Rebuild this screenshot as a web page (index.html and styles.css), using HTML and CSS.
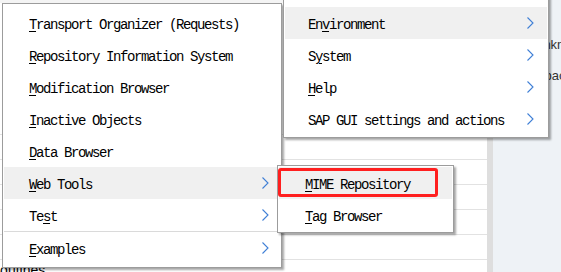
FILE: index.html
```html
<!DOCTYPE html>
<html>
<head>
<meta charset="utf-8">
<link rel="stylesheet" href="styles.css">
</head>
<body>
<div class="app">
  <div class="main">
    <div class="main-head"></div>
    <div class="row"></div>
    <div class="row"></div>
    <div class="row"></div>
    <div class="row"></div>
    <div class="row"></div>
    <div class="row last"><span class="row-text">Routines</span></div>
  </div>
  <div class="scroll"></div>
  <div class="side">
    <div class="side-line l1">Unknown</div>
    <div class="side-line l2">Workspace</div>
  </div>
</div>

<div class="menu menu-main">
  <div class="item"><span class="lbl"><u>T</u>ransport Organizer (Requests)</span></div>
  <div class="item"><span class="lbl"><u>R</u>epository Information System</span></div>
  <div class="item"><span class="lbl"><u>M</u>odification Browser</span></div>
  <div class="item"><span class="lbl"><u>I</u>nactive Objects</span></div>
  <div class="item"><span class="lbl"><u>D</u>ata Browser</span></div>
  <div class="item hl"><span class="lbl"><u>W</u>eb Tools</span><svg class="chev" width="7" height="12" viewBox="0 0 7 12"><polyline points="0.5,0.5 6,6 0.5,11.5"/></svg></div>
  <div class="item"><span class="lbl">Te<u>s</u>t</span><svg class="chev" width="7" height="12" viewBox="0 0 7 12"><polyline points="0.5,0.5 6,6 0.5,11.5"/></svg></div>
  <div class="sep"></div>
  <div class="item"><span class="lbl"><u>E</u>xamples</span><svg class="chev" width="7" height="12" viewBox="0 0 7 12"><polyline points="0.5,0.5 6,6 0.5,11.5"/></svg></div>
</div>

<div class="menu menu-sys">
  <div class="item"></div>
  <div class="item hl"><span class="lbl">En<u>v</u>ironment</span><svg class="chev" width="7" height="12" viewBox="0 0 7 12"><polyline points="0.5,0.5 6,6 0.5,11.5"/></svg></div>
  <div class="item"><span class="lbl">S<u>y</u>stem</span><svg class="chev" width="7" height="12" viewBox="0 0 7 12"><polyline points="0.5,0.5 6,6 0.5,11.5"/></svg></div>
  <div class="item"><span class="lbl"><u>H</u>elp</span><svg class="chev" width="7" height="12" viewBox="0 0 7 12"><polyline points="0.5,0.5 6,6 0.5,11.5"/></svg></div>
  <div class="item"><span class="lbl">SAP GUI settings and actions</span><svg class="chev" width="7" height="12" viewBox="0 0 7 12"><polyline points="0.5,0.5 6,6 0.5,11.5"/></svg></div>
</div>

<div class="menu menu-web">
  <div class="item hl"><span class="lbl"><u>M</u>IME Repository</span></div>
  <div class="item"><span class="lbl"><u>T</u>ag Browser</span></div>
  <div class="mark"></div>
</div>
</body>
</html>
```

FILE: styles.css
```css
html, body {
  margin: 0;
  padding: 0;
}
body {
  width: 561px;
  height: 272px;
  overflow: hidden;
  position: relative;
  background: #ffffff;
  font-family: "Liberation Sans", Arial, sans-serif;
}
.app {
  display: flex;
  height: 272px;
  overflow: hidden;
}
.main {
  width: 487px;
  background: #ffffff;
  display: flex;
  flex-direction: column;
  overflow: hidden;
}
.main-head {
  height: 134px;
  flex: none;
  background: linear-gradient(#f4f4f4 0, #f4f4f4 3px, #ffffff 3px);
}
.row {
  height: 24px;
  flex: none;
  border-top: 1px solid #e2e2e2;
}
.row.last {
  height: 13px;
  overflow: hidden;
}
.row-text {
  display: block;
  font-size: 14px;
  line-height: 21px;
  color: #000;
  text-indent: -10px;
}
.scroll {
  width: 6px;
  background: #dedede;
}
.side {
  flex: 1;
  background: #eef2f6;
  color: #333;
  font-size: 13px;
  white-space: nowrap;
  overflow: hidden;
}
.side-line {
  height: 31px;
  line-height: 31px;
}
.side-line.l1 {
  margin-top: 29px;
  padding-left: 41px;
}
.side-line.l2 {
  padding-left: 15px;
}

.menu {
  position: absolute;
  box-sizing: border-box;
  background: #ffffff;
  border: 1px solid #9c9c9c;
  box-shadow: 2px 2px 2px rgba(0, 0, 0, 0.35);
  font-family: "Liberation Mono", "Courier New", monospace;
  font-size: 14px;
  letter-spacing: -1.4px;
  color: #000;
  white-space: nowrap;
}
.menu u {
  text-decoration: underline;
  text-underline-offset: 2px;
  text-decoration-thickness: 1px;
}
.item {
  height: 32px;
  display: flex;
  align-items: center;
}
.lbl {
  display: block;
  padding-top: 4px;
}
.item.hl {
  background: #f0f0f0;
}
.chev {
  margin-left: auto;
  flex: none;
}
.chev polyline {
  fill: none;
  stroke: #3f7fd6;
  stroke-width: 1.1;
}
.sep {
  height: 1px;
  background: #dadada;
}

.menu-main {
  left: 2px;
  top: 3px;
  width: 280px;
  padding: 3px 1px 3px 1px;
}
.menu-main .item {
  padding-left: 25px;
  padding-right: 11px;
}

.menu-sys {
  left: 283px;
  top: -29px;
  width: 266px;
  padding: 3px 1px 2px 1px;
}
.menu-sys .item {
  padding-left: 23px;
  padding-right: 13px;
}

.menu-web {
  left: 277px;
  top: 165px;
  width: 177px;
  padding: 1px;
}
.menu-web .item {
  padding-left: 26px;
  padding-right: 10px;
}
.mark {
  position: absolute;
  left: 0;
  top: 2px;
  width: 160px;
  height: 29px;
  box-sizing: border-box;
  border: 3px solid #ff1f1f;
  border-radius: 3px;
}
```
